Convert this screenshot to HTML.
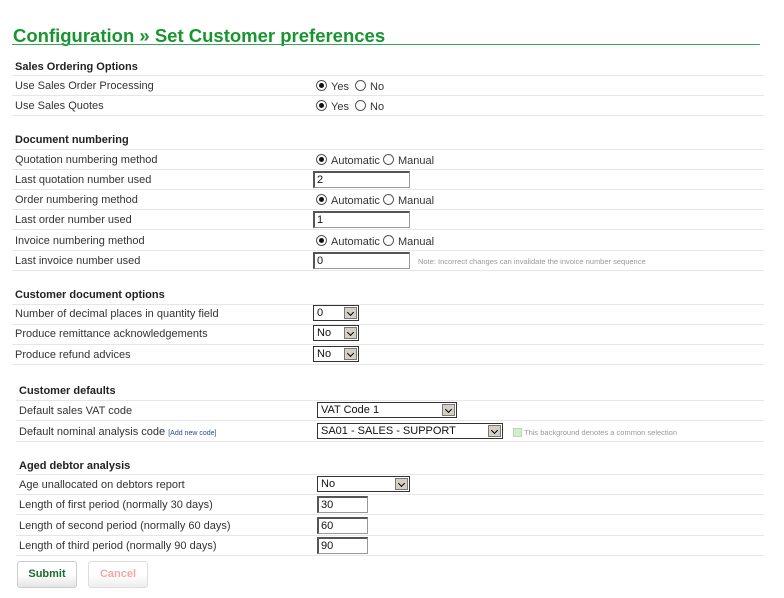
<!DOCTYPE html>
<html><head><style>
body{margin:0;width:784px;height:598px;background:#fff;position:relative;font-family:"Liberation Sans",sans-serif;font-size:11px;color:#333;overflow:hidden}
.a{position:absolute}
.t{position:absolute;line-height:14px;white-space:nowrap;margin-top:1px}
.h{font-weight:bold;color:#222}
.s{position:absolute;height:1px;background:#e6e6e6;left:12px;width:752px}
.r{position:absolute;width:9px;height:9px;border:1px solid #555;border-radius:50%;background:#fff}
.r.on::after{content:"";position:absolute;left:2px;top:2px;width:5px;height:5px;border-radius:50%;background:#111}
.in{position:absolute;border:1px solid #999;border-top:2px solid #555;border-left:2px solid #555;background:#fff;line-height:14px;padding-left:2px;font-size:11px;color:#111;box-sizing:border-box;height:17px}
.sel{position:absolute;height:16px;border:1px solid #333;box-sizing:border-box;background:#fff;line-height:14px;padding-left:3px;font-size:11px;color:#111}
.sel b{position:absolute;right:1px;top:1px;width:13px;height:12px;background:#d4d0c8;border:1px solid #777;box-sizing:border-box}
.sel b::after{content:"";position:absolute;left:3px;top:2px;width:4px;height:4px;border-right:1.5px solid #000;border-bottom:1.5px solid #000;transform:rotate(45deg)}
</style></head><body>
<div class="t" style="left:13px;top:24px;font-size:18.5px;line-height:22px;font-weight:bold;color:#17962f">Configuration » Set Customer preferences</div>
<div class="a" style="left:12px;top:44px;width:748px;height:1px;background:#3aa55a"></div>

<div class="t h" style="left:15px;top:59px">Sales Ordering Options</div>
<div class="s" style="top:75px"></div>
<div class="t" style="left:15px;top:78px">Use Sales Order Processing</div>
<div class="s" style="top:95px"></div>
<div class="t" style="left:15px;top:98px">Use Sales Quotes</div>
<div class="s" style="top:115px"></div>
<div class="r on" style="left:316px;top:80px"></div><div class="t" style="left:331px;top:79px">Yes</div><div class="r" style="left:355px;top:80px"></div><div class="t" style="left:370px;top:79px">No</div>
<div class="r on" style="left:316px;top:100px"></div><div class="t" style="left:331px;top:99px">Yes</div><div class="r" style="left:355px;top:100px"></div><div class="t" style="left:370px;top:99px">No</div>

<div class="t h" style="left:15px;top:132px">Document numbering</div>
<div class="s" style="top:149px"></div>
<div class="t" style="left:15px;top:152px">Quotation numbering method</div>
<div class="s" style="top:169px"></div>
<div class="t" style="left:15px;top:172px">Last quotation number used</div>
<div class="s" style="top:189px"></div>
<div class="t" style="left:15px;top:192px">Order numbering method</div>
<div class="s" style="top:209px"></div>
<div class="t" style="left:15px;top:212px">Last order number used</div>
<div class="s" style="top:229px"></div>
<div class="t" style="left:15px;top:233px">Invoice numbering method</div>
<div class="s" style="top:250px"></div>
<div class="t" style="left:15px;top:253px">Last invoice number used</div>
<div class="s" style="top:270px"></div>
<div class="r on" style="left:316px;top:154px"></div><div class="t" style="left:331px;top:153px">Automatic</div><div class="r" style="left:383px;top:154px"></div><div class="t" style="left:398px;top:153px">Manual</div>
<div class="in" style="left:313px;top:171px;width:97px">2</div>
<div class="r on" style="left:316px;top:194px"></div><div class="t" style="left:331px;top:193px">Automatic</div><div class="r" style="left:383px;top:194px"></div><div class="t" style="left:398px;top:193px">Manual</div>
<div class="in" style="left:313px;top:211px;width:97px">1</div>
<div class="r on" style="left:316px;top:235px"></div><div class="t" style="left:331px;top:234px">Automatic</div><div class="r" style="left:383px;top:235px"></div><div class="t" style="left:398px;top:234px">Manual</div>
<div class="in" style="left:313px;top:252px;width:97px">0</div>
<div class="t" style="left:418px;top:254px;font-size:7.5px;color:#999">Note: Incorrect changes can invalidate the invoice number sequence</div>

<div class="t h" style="left:15px;top:287px">Customer document options</div>
<div class="s" style="top:304px"></div>
<div class="t" style="left:15px;top:306px">Number of decimal places in quantity field</div>
<div class="s" style="top:324px"></div>
<div class="t" style="left:15px;top:326px">Produce remittance acknowledgements</div>
<div class="s" style="top:344px"></div>
<div class="t" style="left:15px;top:347px">Produce refund advices</div>
<div class="s" style="top:364px"></div>
<div class="sel" style="left:313px;top:305px;width:46px">0<b></b></div>
<div class="sel" style="left:313px;top:325px;width:46px">No<b></b></div>
<div class="sel" style="left:313px;top:346px;width:46px">No<b></b></div>

<div class="t h" style="left:19px;top:383px">Customer defaults</div>
<div class="s" style="top:400px;left:16px;width:748px"></div>
<div class="t" style="left:19px;top:403px">Default sales VAT code</div>
<div class="s" style="top:420px;left:16px;width:748px"></div>
<div class="t" style="left:19px;top:424px">Default nominal analysis code <span style="font-size:7px;color:#2a4a9a">[Add new code]</span></div>
<div class="s" style="top:441px;left:16px;width:748px"></div>
<div class="sel" style="left:317px;top:402px;width:140px">VAT Code 1<b></b></div>
<div class="sel" style="left:317px;top:423px;width:186px">SA01 - SALES - SUPPORT<b></b></div>
<div class="a" style="left:513px;top:428px;width:7px;height:7px;background:#d6ecd0;border:1px solid #b8d8b0"></div>
<div class="t" style="left:524px;top:425px;font-size:7.5px;color:#999">This background denotes a common selection</div>

<div class="t h" style="left:19px;top:458px">Aged debtor analysis</div>
<div class="s" style="top:474px;left:16px;width:748px"></div>
<div class="t" style="left:19px;top:477px">Age unallocated on debtors report</div>
<div class="s" style="top:494px;left:16px;width:748px"></div>
<div class="t" style="left:19px;top:497px">Length of first period (normally 30 days)</div>
<div class="s" style="top:514px;left:16px;width:748px"></div>
<div class="t" style="left:19px;top:518px">Length of second period (normally 60 days)</div>
<div class="s" style="top:535px;left:16px;width:748px"></div>
<div class="t" style="left:19px;top:538px">Length of third period (normally 90 days)</div>
<div class="s" style="top:555px;left:16px;width:748px"></div>
<div class="sel" style="left:317px;top:476px;width:93px">No<b></b></div>
<div class="in" style="left:317px;top:496px;width:51px">30</div>
<div class="in" style="left:317px;top:517px;width:51px">60</div>
<div class="in" style="left:317px;top:537px;width:51px">90</div>

<div class="a" style="left:17px;top:561px;width:60px;height:27px;border:1px solid #ccc;border-radius:3px;background:linear-gradient(#fff,#fff 50%,#e4e4e4);box-sizing:border-box;text-align:center;line-height:25px;font-weight:bold;color:#1e6a2e;font-size:11px">Submit</div>
<div class="a" style="left:88px;top:561px;width:60px;height:27px;border:1px solid #ddd;border-radius:3px;background:linear-gradient(#fff,#fff 50%,#eee);box-sizing:border-box;text-align:center;line-height:25px;font-weight:bold;color:#f0a8a8;font-size:11px">Cancel</div>
</body></html>
